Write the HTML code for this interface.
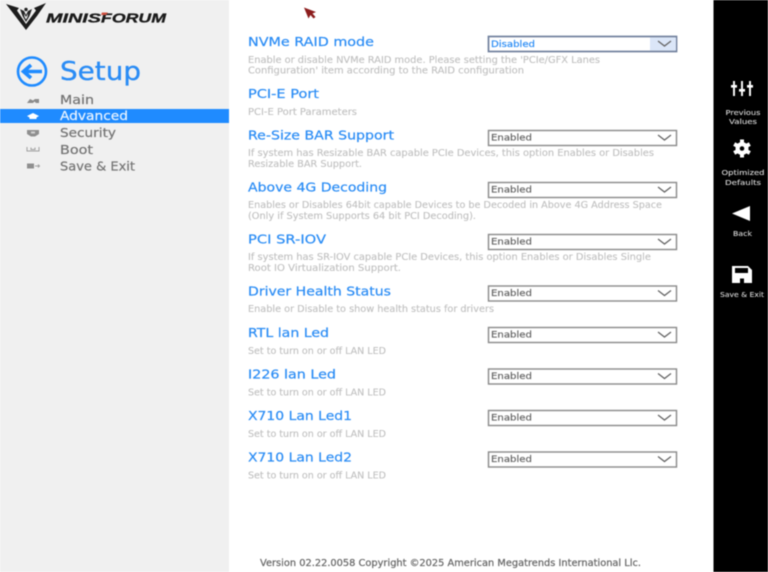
<!DOCTYPE html>
<html><head><meta charset="utf-8"><title>Setup</title>
<style>
html,body{margin:0;padding:0;width:768px;height:572px;overflow:hidden;background:#fff}
svg{display:block;filter:blur(.5px)}
text{font-family:"DejaVu Sans",sans-serif}
.h{font-size:12.5px;fill:#2a8cf5;stroke:#2a8cf5;stroke-width:.2px}
.d{font-size:9.3px;fill:#c0c0c0;stroke:#c0c0c0;stroke-width:.12px}
.m{font-size:12px;fill:#747474;stroke:#747474;stroke-width:.2px}
.a{font-size:12px;fill:#eaf4ff;stroke:#eaf4ff;stroke-width:.2px}
.v{font-size:8.6px;fill:#666;stroke:#666;stroke-width:.2px}
.r{font-size:7.4px;fill:#d4d4d4;stroke:#d4d4d4;stroke-width:.12px}
.b{fill:#fff;stroke:#8a8a8a;stroke-width:1.4}
.c{fill:none;stroke:#666;stroke-width:1.3}
.l{font-family:"Liberation Sans",sans-serif;font-weight:bold;font-style:italic;font-size:13px;fill:#1a1a1a;stroke:#1a1a1a;stroke-width:.3px}
</style></head><body>
<svg width="768" height="572" viewBox="0 0 768 572" xmlns="http://www.w3.org/2000/svg">
<rect width="768" height="572" fill="#fff"/>
<rect width="229" height="572" fill="#f0f0f0"/>
<rect x="713.500" width="54.500" height="572" fill="#000"/>
<rect y="109" width="229" height="14" fill="#1f8bff"/>

<!-- logo -->
<path d="M6 4 L19 8 L17 10.500 L26 24 L26 30 L16 17Z" fill="#1c1c1c"/>
<path d="M46 3 L34 8 L36 10.500 L26 24 L26 30 L37 16Z" fill="#1c1c1c"/>
<path d="M20 9 L24 11 L26 15 L28 11 L32 9 L29.500 16 L26 22 L22.500 16Z" fill="#222"/>
<path d="M24 13.500 L26 17 L28 13.500 L27.500 17 L26 19.500 L24.500 17Z" fill="#f0f0f0"/>
<circle cx="26" cy="9.500" r="1.700" fill="#222"/>
<text class="l" x="46" y="22.500" textLength="55" lengthAdjust="spacingAndGlyphs">MINIS</text>
<text class="l" x="101" y="22.500" textLength="65" lengthAdjust="spacingAndGlyphs">FORUM</text>
<path d="M102 12.500 L108 12.500 L106 15 L101 15Z" fill="#d0503f"/>

<!-- back arrow + setup -->
<circle cx="32" cy="71.500" r="14" fill="none" stroke="#1f8bff" stroke-width="2.600"/>
<path d="M42 71.500 H24 M31 65 L23.500 71.500 L31 78" fill="none" stroke="#1f8bff" stroke-width="3.600"/>
<text x="60" y="80" font-size="26" fill="#2a8cf5" stroke="#2a8cf5" stroke-width=".3" textLength="81" lengthAdjust="spacingAndGlyphs">Setup</text>

<!-- nav -->
<text class="m" x="60" y="104" textLength="34" lengthAdjust="spacingAndGlyphs">Main</text>
<text class="a" x="60" y="120" textLength="68" lengthAdjust="spacingAndGlyphs">Advanced</text>
<text class="m" x="60" y="137" textLength="56" lengthAdjust="spacingAndGlyphs">Security</text>
<text class="m" x="60" y="154" textLength="33" lengthAdjust="spacingAndGlyphs">Boot</text>
<text class="m" x="60" y="170.500" textLength="75" lengthAdjust="spacingAndGlyphs">Save &amp; Exit</text>
<path d="M27 103 L30 99 L33 100.500 L35 99 L39 99 L39 103 L36 103 L34.500 101.500 L33 103Z" fill="#8c8c8c"/>
<path d="M27 116 L33 113 L39 116 L36.500 117.500 V119 H29.500 V117.500Z" fill="#fff"/>
<path d="M27 130 H39 V134 L35 136.500 H31 L27 134Z" fill="#8f8f8f"/>
<rect x="31" y="131.500" width="4" height="2" fill="#d0d0d0"/>
<path d="M27 147 V151 H39 V147 M31 147.500 V149.500 H35 V147.500" fill="none" stroke="#a0a0a0" stroke-width="1"/>
<rect x="27" y="163.500" width="7" height="5" fill="#8f8f8f"/>
<path d="M35 166 H39.500 M38 164.500 L39.500 166 L38 167.500" fill="none" stroke="#a0a0a0" stroke-width="1"/>

<!-- cursor -->
<path d="M304 7.500 L316 12 L312.500 13.500 L315.500 17 L313.500 18.500 L310.500 15 L308.500 18.500Z" fill="#8c1d1d"/>

<!-- rows -->
<text class="h" x="248" y="46" textLength="126" lengthAdjust="spacingAndGlyphs">NVMe RAID mode</text>
<text class="d" x="248" y="63" textLength="352" lengthAdjust="spacingAndGlyphs">Enable or disable NVMe RAID mode. Please setting the 'PCIe/GFX Lanes</text>
<text class="d" x="248" y="73.500" textLength="276" lengthAdjust="spacingAndGlyphs">Configuration' item according to the RAID configuration</text>

<text class="h" x="248" y="98" textLength="71" lengthAdjust="spacingAndGlyphs">PCI-E Port</text>
<text class="d" x="248" y="115" textLength="109" lengthAdjust="spacingAndGlyphs">PCI-E Port Parameters</text>

<text class="h" x="248" y="139.500" textLength="146" lengthAdjust="spacingAndGlyphs">Re-Size BAR Support</text>
<text class="d" x="248" y="156" textLength="406" lengthAdjust="spacingAndGlyphs">If system has Resizable BAR capable PCIe Devices, this option Enables or Disables</text>
<text class="d" x="248" y="167" textLength="114" lengthAdjust="spacingAndGlyphs">Resizable BAR Support.</text>

<text class="h" x="248" y="191.500" textLength="139" lengthAdjust="spacingAndGlyphs">Above 4G Decoding</text>
<text class="d" x="248" y="208" textLength="414" lengthAdjust="spacingAndGlyphs">Enables or Disables 64bit capable Devices to be Decoded in Above 4G Address Space</text>
<text class="d" x="248" y="219" textLength="228" lengthAdjust="spacingAndGlyphs">(Only if System Supports 64 bit PCI Decoding).</text>

<text class="h" x="248" y="243.500" textLength="78" lengthAdjust="spacingAndGlyphs">PCI SR-IOV</text>
<text class="d" x="248" y="260" textLength="403" lengthAdjust="spacingAndGlyphs">If system has SR-IOV capable PCIe Devices, this option Enables or Disables Single</text>
<text class="d" x="248" y="271" textLength="153" lengthAdjust="spacingAndGlyphs">Root IO Virtualization Support.</text>

<text class="h" x="248" y="295.500" textLength="143" lengthAdjust="spacingAndGlyphs">Driver Health Status</text>
<text class="d" x="248" y="312" textLength="246" lengthAdjust="spacingAndGlyphs">Enable or Disable to show health status for drivers</text>

<text class="h" x="248" y="337" textLength="81" lengthAdjust="spacingAndGlyphs">RTL lan Led</text>
<text class="d" x="248" y="354" textLength="138" lengthAdjust="spacingAndGlyphs">Set to turn on or off LAN LED</text>

<text class="h" x="248" y="378.500" textLength="88" lengthAdjust="spacingAndGlyphs">I226 lan Led</text>
<text class="d" x="248" y="395.500" textLength="138" lengthAdjust="spacingAndGlyphs">Set to turn on or off LAN LED</text>

<text class="h" x="248" y="420" textLength="104" lengthAdjust="spacingAndGlyphs">X710 Lan Led1</text>
<text class="d" x="248" y="437" textLength="138" lengthAdjust="spacingAndGlyphs">Set to turn on or off LAN LED</text>

<text class="h" x="248" y="461.500" textLength="104" lengthAdjust="spacingAndGlyphs">X710 Lan Led2</text>
<text class="d" x="248" y="478.500" textLength="138" lengthAdjust="spacingAndGlyphs">Set to turn on or off LAN LED</text>

<!-- selected dropdown -->
<rect x="488.500" y="36.500" width="188" height="15" fill="#fff" stroke="#6f7f9c" stroke-width="1.700"/>
<rect x="650" y="37.500" width="26" height="13" fill="#dbe6f8"/>
<text x="491" y="47" font-size="8.600" fill="#2a8cf5" stroke="#2a8cf5" stroke-width=".2" textLength="44" lengthAdjust="spacingAndGlyphs">Disabled</text>
<path class="c" d="M658 41 L664.500 46 L671 41"/>

<!-- dropdowns -->
<g>
<rect class="b" x="488.500" y="130.500" width="188" height="15"/><text class="v" x="491" y="140.500" textLength="41" lengthAdjust="spacingAndGlyphs">Enabled</text><path class="c" d="M658 135 L664.500 140 L671 135"/>
<rect class="b" x="488.500" y="182.500" width="188" height="15"/><text class="v" x="491" y="192.500" textLength="41" lengthAdjust="spacingAndGlyphs">Enabled</text><path class="c" d="M658 187 L664.500 192 L671 187"/>
<rect class="b" x="488.500" y="234.500" width="188" height="15"/><text class="v" x="491" y="244.500" textLength="41" lengthAdjust="spacingAndGlyphs">Enabled</text><path class="c" d="M658 239 L664.500 244 L671 239"/>
<rect class="b" x="488.500" y="286" width="188" height="15"/><text class="v" x="491" y="296" textLength="41" lengthAdjust="spacingAndGlyphs">Enabled</text><path class="c" d="M658 290.500 L664.500 295.500 L671 290.500"/>
<rect class="b" x="488.500" y="327.500" width="188" height="15"/><text class="v" x="491" y="337.500" textLength="41" lengthAdjust="spacingAndGlyphs">Enabled</text><path class="c" d="M658 332 L664.500 337 L671 332"/>
<rect class="b" x="488.500" y="369" width="188" height="15"/><text class="v" x="491" y="379" textLength="41" lengthAdjust="spacingAndGlyphs">Enabled</text><path class="c" d="M658 373.500 L664.500 378.500 L671 373.500"/>
<rect class="b" x="488.500" y="410.500" width="188" height="15"/><text class="v" x="491" y="420.500" textLength="41" lengthAdjust="spacingAndGlyphs">Enabled</text><path class="c" d="M658 415 L664.500 420 L671 415"/>
<rect class="b" x="488.500" y="452" width="188" height="15"/><text class="v" x="491" y="462" textLength="41" lengthAdjust="spacingAndGlyphs">Enabled</text><path class="c" d="M658 456.500 L664.500 461.500 L671 456.500"/>
</g>

<!-- footer -->
<text x="260" y="566" font-size="9.300" fill="#666" stroke="#666" stroke-width=".2" textLength="381" lengthAdjust="spacingAndGlyphs">Version 02.22.0058 Copyright ©2025 American Megatrends International Llc.</text>

<!-- right rail -->
<path d="M734 81 V96 M742 81 V96 M750 81 V96" stroke="#fff" stroke-width="1.900" fill="none"/>
<rect x="731" y="85" width="6" height="2.600" fill="#fff"/>
<rect x="739" y="89" width="6" height="2.600" fill="#fff"/>
<rect x="747" y="85" width="6" height="2.600" fill="#fff"/>
<text class="r" x="725.500" y="115" textLength="35" lengthAdjust="spacingAndGlyphs">Previous</text>
<text class="r" x="729" y="124" textLength="28" lengthAdjust="spacingAndGlyphs">Values</text>

<g transform="translate(742,148.500)">
<circle r="6.500" fill="#fff"/>
<g fill="#fff"><rect x="-2" y="-9" width="4" height="18"/><rect x="-2" y="-9" width="4" height="18" transform="rotate(60)"/><rect x="-2" y="-9" width="4" height="18" transform="rotate(120)"/></g>
<circle r="2.300" fill="#000"/>
</g>
<text class="r" x="721.500" y="175" textLength="43" lengthAdjust="spacingAndGlyphs">Optimized</text>
<text class="r" x="725" y="185" textLength="36" lengthAdjust="spacingAndGlyphs">Defaults</text>

<path d="M732 213.500 L750 206 V221Z" fill="#fff"/>
<text class="r" x="733" y="236" textLength="19" lengthAdjust="spacingAndGlyphs">Back</text>

<path d="M732 266 H748 L752 270 V283 H732Z" fill="#fff"/>
<rect x="735" y="268" width="13" height="5" fill="#000"/>
<rect x="740" y="278.500" width="4" height="4.500" fill="#000"/>
<text class="r" x="720" y="297" textLength="44" lengthAdjust="spacingAndGlyphs">Save &amp; Exit</text>
</svg>
</body></html>
